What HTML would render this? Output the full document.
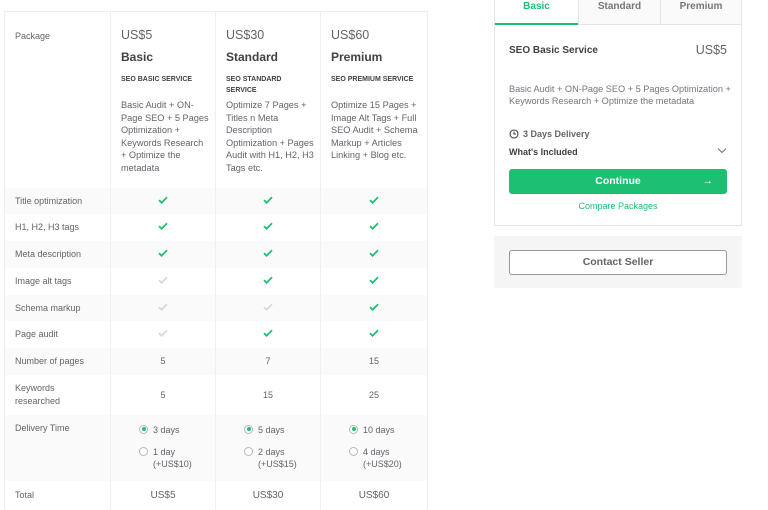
<!DOCTYPE html>
<html><head><style>
*{margin:0;padding:0;box-sizing:border-box}
body{width:768px;height:509px;background:#fff;font-family:"Liberation Sans",sans-serif;color:#62646a;position:relative;overflow:hidden;font-size:9px}
.a{position:absolute}
table{position:absolute;left:4px;top:11px;border-collapse:collapse;width:423px;table-layout:fixed}
td{border-left:1px solid #efeff0;border-right:1px solid #efeff0;vertical-align:middle;font-size:9px;color:#62646a;text-align:center;padding:0}
td:first-child{text-align:left;padding-left:10px}
tr.g td{background:#fafafa}
tr.top td{border-top:1px solid #efeff0;vertical-align:top;text-align:left;padding:0 0 0 10px;white-space:nowrap;overflow:hidden}
.pr{font-size:12.5px;color:#62646a;margin-top:16px}
.nm{font-size:12px;font-weight:bold;color:#404145;margin-top:8px}
.sv{font-size:7px;font-weight:bold;color:#404145;margin-top:10px;line-height:11px;height:22px}
.ds{font-size:9.2px;line-height:12.5px;margin-top:3px}
.rad{display:inline-block;width:9px;height:9px;border-radius:50%;border:1px solid #b5b6ba;vertical-align:-1px;margin-right:5px;position:relative;background:#fff}
.rad.on::after{content:"";position:absolute;left:1.5px;top:1.5px;width:4px;height:4px;border-radius:50%;background:#1dbf73}
</style></head><body>
<svg width="0" height="0" style="position:absolute"><defs>
<symbol id="c" viewBox="0 0 10 8"><path d="M1 4.2l2.6 2.5L9 1.3" fill="none" stroke="currentColor" stroke-width="1.8"/></symbol></defs></svg>
<table>
<colgroup><col style="width:106px"><col style="width:105px"><col style="width:105px"><col style="width:107px"></colgroup>
<tr class="top" style="height:176px">
<td style="padding-top:19px;font-size:9px">Package</td>
<td><div class="pr">US$5</div><div class="nm">Basic</div><div class="sv">SEO BASIC SERVICE</div><div class="ds">Basic Audit + ON-<br>Page SEO + 5 Pages<br>Optimization +<br>Keywords Research<br>+ Optimize the<br>metadata</div></td>
<td><div class="pr">US$30</div><div class="nm">Standard</div><div class="sv">SEO STANDARD<br>SERVICE</div><div class="ds">Optimize 7 Pages +<br>Titles n Meta<br>Description<br>Optimization + Pages<br>Audit with H1, H2, H3<br>Tags etc.</div></td>
<td><div class="pr">US$60</div><div class="nm">Premium</div><div class="sv">SEO PREMIUM SERVICE</div><div class="ds">Optimize 15 Pages +<br>Image Alt Tags + Full<br>SEO Audit + Schema<br>Markup + Articles<br>Linking + Blog etc.</div></td>
</tr>
<tr class="g" style="height:26px"><td>Title optimization</td><td><svg width="10" height="8" style="color:#1dbf73"><use href="#c"/></svg></td><td><svg width="10" height="8" style="color:#1dbf73"><use href="#c"/></svg></td><td><svg width="10" height="8" style="color:#1dbf73"><use href="#c"/></svg></td></tr>
<tr style="height:27px"><td>H1, H2, H3 tags</td><td><svg width="10" height="8" style="color:#1dbf73"><use href="#c"/></svg></td><td><svg width="10" height="8" style="color:#1dbf73"><use href="#c"/></svg></td><td><svg width="10" height="8" style="color:#1dbf73"><use href="#c"/></svg></td></tr>
<tr class="g" style="height:27px"><td>Meta description</td><td><svg width="10" height="8" style="color:#1dbf73"><use href="#c"/></svg></td><td><svg width="10" height="8" style="color:#1dbf73"><use href="#c"/></svg></td><td><svg width="10" height="8" style="color:#1dbf73"><use href="#c"/></svg></td></tr>
<tr style="height:27px"><td>Image alt tags</td><td><svg width="10" height="8" style="color:#d8d8db"><use href="#c"/></svg></td><td><svg width="10" height="8" style="color:#1dbf73"><use href="#c"/></svg></td><td><svg width="10" height="8" style="color:#1dbf73"><use href="#c"/></svg></td></tr>
<tr class="g" style="height:26px"><td>Schema markup</td><td><svg width="10" height="8" style="color:#d8d8db"><use href="#c"/></svg></td><td><svg width="10" height="8" style="color:#d8d8db"><use href="#c"/></svg></td><td><svg width="10" height="8" style="color:#1dbf73"><use href="#c"/></svg></td></tr>
<tr style="height:27px"><td>Page audit</td><td><svg width="10" height="8" style="color:#d8d8db"><use href="#c"/></svg></td><td><svg width="10" height="8" style="color:#1dbf73"><use href="#c"/></svg></td><td><svg width="10" height="8" style="color:#1dbf73"><use href="#c"/></svg></td></tr>
<tr class="g" style="height:27px"><td>Number of pages</td><td>5</td><td>7</td><td>15</td></tr>
<tr style="height:40px"><td style="line-height:13px">Keywords<br>researched</td><td>5</td><td>15</td><td>25</td></tr>
<tr class="g" style="height:66px"><td style="vertical-align:top;padding-top:8px">Delivery Time</td>
<td style="vertical-align:top;text-align:left;padding:9px 0 0 28px;line-height:12px"><div><span class="rad on"></span>3 days</div><div style="margin-top:10px"><span class="rad"></span>1 day<br><span style="padding-left:14px">(+US$10)</span></div></td>
<td style="vertical-align:top;text-align:left;padding:9px 0 0 28px;line-height:12px"><div><span class="rad on"></span>5 days</div><div style="margin-top:10px"><span class="rad"></span>2 days<br><span style="padding-left:14px">(+US$15)</span></div></td>
<td style="vertical-align:top;text-align:left;padding:9px 0 0 28px;line-height:12px"><div><span class="rad on"></span>10 days</div><div style="margin-top:10px"><span class="rad"></span>4 days<br><span style="padding-left:14px">(+US$20)</span></div></td></tr>
<tr style="height:29px"><td>Total</td><td style="font-size:10px">US$5</td><td style="font-size:10px">US$30</td><td style="font-size:10px">US$60</td></tr>
</table>

<div class="a" style="left:494px;top:-1px;width:248px;height:227px;border:1px solid #e4e5e7"></div>
<div class="a" style="left:495px;top:0;width:83px;height:25px;border-bottom:2px solid #1dbf73;text-align:center;font-size:10px;font-weight:bold;color:#1dbf73;line-height:14px">Basic</div>
<div class="a" style="left:578px;top:0;width:82px;height:25px;background:#fafafa;border-left:1px solid #e4e5e7;border-bottom:1px solid #e4e5e7;text-align:center;font-size:10px;font-weight:bold;color:#74767e;line-height:14px">Standard</div>
<div class="a" style="left:660px;top:0;width:81px;height:25px;background:#fafafa;border-left:1px solid #e4e5e7;border-bottom:1px solid #e4e5e7;text-align:center;font-size:10px;font-weight:bold;color:#74767e;line-height:14px">Premium</div>
<div class="a" style="left:509px;top:45px;font-size:10px;font-weight:bold;color:#404145">SEO Basic Service</div>
<div class="a" style="left:680px;top:43px;width:47px;text-align:right;font-size:12.5px;color:#62646a">US$5</div>
<div class="a" style="left:509px;top:83px;white-space:nowrap;font-size:9.2px;line-height:12px;color:#74767e">Basic Audit + ON-Page SEO + 5 Pages Optimization +<br>Keywords Research + Optimize the metadata</div>
<svg class="a" style="left:509px;top:129px" width="10" height="10" viewBox="0 0 10 10"><circle cx="5" cy="5" r="4" fill="none" stroke="#404145" stroke-width="1.1"/><path d="M5 2.6V5h2" fill="none" stroke="#404145" stroke-width="1.1"/></svg>
<div class="a" style="left:523px;top:129px;font-size:9px;font-weight:bold;color:#62646a">3 Days Delivery</div>
<div class="a" style="left:509px;top:147px;font-size:9px;font-weight:bold;color:#404145">What's Included</div>
<svg class="a" style="left:717px;top:147px" width="10" height="7" viewBox="0 0 10 7"><path d="M1 1.5l4 4 4-4" fill="none" stroke="#74767e" stroke-width="1.1"/></svg>
<div class="a" style="left:509px;top:169px;width:218px;height:25px;background:#1dbf73;border-radius:3px;color:#fff;font-weight:bold;font-size:10.5px;text-align:center;line-height:25px">Continue<span style="position:absolute;right:14px;font-weight:normal">→</span></div>
<div class="a" style="left:509px;top:201px;width:218px;text-align:center;font-size:9px;color:#1dbf73">Compare Packages</div>
<div class="a" style="left:494px;top:236px;width:248px;height:52px;background:#f5f5f5"></div>
<div class="a" style="left:509px;top:250px;width:218px;height:25px;background:#fff;border:1px solid #95979d;border-radius:3px;text-align:center;line-height:23px;font-size:10.5px;font-weight:bold;color:#62646a">Contact Seller</div>
</body></html>
